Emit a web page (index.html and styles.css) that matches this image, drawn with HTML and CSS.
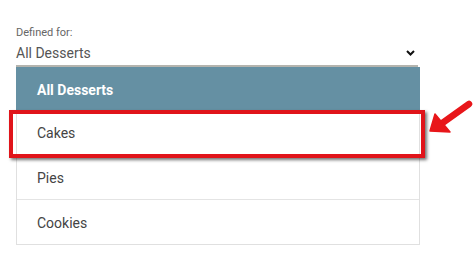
FILE: index.html
```html
<!DOCTYPE html>
<html>
<head>
<meta charset="utf-8">
<link rel="stylesheet" href="styles.css">
</head>
<body>
<div class="page">
  <div class="field">
    <div class="label">Defined for:</div>
    <div class="select">
      <span class="value">All Desserts</span>
      <svg class="chevron" width="9" height="6" viewBox="0 0 9 6"><polyline points="1,1 4.5,4.5 8,1" fill="none" stroke="#111" stroke-width="2"/></svg>
    </div>
    <ul class="menu">
      <li class="item active">All Desserts</li>
      <li class="item">Cakes</li>
      <li class="item">Pies</li>
      <li class="item">Cookies</li>
    </ul>
  </div>
  <div class="highlight"></div>
  <svg class="arrow" width="474" height="258" viewBox="0 0 474 258">
    <line x1="469" y1="104" x2="441" y2="124" stroke="#e8161a" stroke-width="6.5" stroke-linecap="round"/>
    <polygon points="430,131 435,114 450,132" fill="#e8161a" stroke="#e8161a" stroke-width="1.5" stroke-linejoin="round"/>
  </svg>
</div>
</body>
</html>
```
FILE: styles.css
```css
html, body {
  margin: 0;
  padding: 0;
  background: #fff;
}
.page {
  position: relative;
  width: 474px;
  height: 258px;
  overflow: hidden;
  font-family: Roboto, "Liberation Sans", sans-serif;
}
.field {
  width: 404px;
  margin-left: 16px;
  padding-top: 26px;
}
.label {
  font-size: 11px;
  line-height: 14px;
  color: #666;
}
.select {
  margin-top: 4px;
  display: flex;
  align-items: center;
  justify-content: space-between;
  width: 402px;
  padding-bottom: 3px;
  border-bottom: 2px solid #b4b4ae;
}
.value {
  font-size: 14px;
  line-height: 18px;
  color: #555;
}
.chevron {
  margin-right: 3px;
}
.menu {
  list-style: none;
  margin: 0;
  padding: 0;
  width: 402px;
  border: 1px solid #e0e0e0;
  border-top: none;
}
.item {
  height: 44px;
  box-sizing: border-box;
  display: flex;
  align-items: center;
  padding-left: 20px;
  padding-top: 2px;
  font-size: 14px;
  color: #444;
  border-bottom: 1px solid #e4e4e4;
  height: 45px;
}
.item:last-child {
  border-bottom: none;
  height: 44px;
}
.item.active {
  background: #6590a3;
  color: #fff;
  font-weight: bold;
  border-bottom: none;
  margin: 0 -1px;
  padding-left: 21px;
  height: 43px;
}
.highlight {
  position: absolute;
  left: 9px;
  top: 110px;
  width: 408px;
  height: 40px;
  border: 4px solid #e0141a;
  box-shadow: 2px 2px 3px rgba(0, 0, 0, 0.55);
}
.arrow {
  position: absolute;
  left: 0;
  top: 0;
}
```
